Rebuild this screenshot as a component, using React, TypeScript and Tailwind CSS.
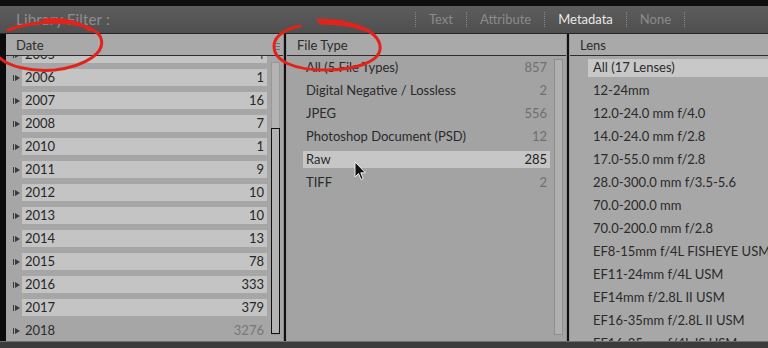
import React from 'react';

const dates: [string, string][] = [
  ['2005', '4'],
  ['2006', '1'],
  ['2007', '16'],
  ['2008', '7'],
  ['2010', '1'],
  ['2011', '9'],
  ['2012', '10'],
  ['2013', '10'],
  ['2014', '13'],
  ['2015', '78'],
  ['2016', '333'],
  ['2017', '379'],
];

const fileTypes = [
  { label: 'All (5 File Types)', count: '857' },
  { label: 'Digital Negative / Lossless', count: '2' },
  { label: 'JPEG', count: '556' },
  { label: 'Photoshop Document (PSD)', count: '12' },
  { label: 'Raw', count: '285', active: true },
  { label: 'TIFF', count: '2' },
];

const lenses = [
  'All (17 Lenses)',
  '12-24mm',
  '12.0-24.0 mm f/4.0',
  '14.0-24.0 mm f/2.8',
  '17.0-55.0 mm f/2.8',
  '28.0-300.0 mm f/3.5-5.6',
  '70.0-200.0 mm',
  '70.0-200.0 mm f/2.8',
  'EF8-15mm f/4L FISHEYE USM',
  'EF11-24mm f/4L USM',
  'EF14mm f/2.8L II USM',
  'EF16-35mm f/2.8L II USM',
  'EF16-35mm f/4L IS USM',
];

const Disclosure = () => (
  <svg width="8" height="8" viewBox="0 0 8 8" className="shrink-0">
    <rect x="0" y="1" width="1" height="6" fill="#3a3a3a" />
    <path d="M2 1 L7 4 L2 7 Z" fill="#3a3a3a" />
  </svg>
);

const Sep = () => <div className="h-[15px] border-l border-dotted border-[#8a8a8a]" />;

function ColumnHeader({ label, grip }: { label: string; grip?: boolean }) {
  return (
    <div className="h-[22px] shrink-0 flex items-center justify-between pt-[3px] pl-[10px] pr-[3px] bg-[#a9a9a9] border-b border-[#2e2e2e] text-[13px] text-[#2b2b2b]">
      <span>{label}</span>
      {grip && (
        <div className="flex flex-col gap-[2px] w-[5px]">
          <div className="h-px bg-[#707070]" />
          <div className="h-px bg-[#707070]" />
          <div className="h-px bg-[#707070]" />
        </div>
      )}
    </div>
  );
}

export default function App() {
  return (
    <div className="w-[768px] h-[348px] relative overflow-hidden bg-[#111] flex flex-col font-['Lato','Open_Sans',sans-serif] select-none">
      {/* top edge */}
      <div className="h-[6px] shrink-0 bg-[#0e0e0e]" />

      {/* filter bar */}
      <div className="h-[28px] shrink-0 bg-gradient-to-b from-[#5d5d5d] to-[#4f4f4f] flex items-center pl-[16px] pr-[83px] border-b border-[#262626]">
        <span className="text-[15px] text-[#8e8e8e] tracking-[0.2px]">Library Filter :</span>
        <div className="ml-auto flex items-center gap-[13px] text-[13px] text-[#8b8b8b]">
          <Sep />
          <span>Text</span>
          <Sep />
          <span>Attribute</span>
          <Sep />
          <span className="text-[#e8e8e8]">Metadata</span>
          <Sep />
          <span>None</span>
          <Sep />
        </div>
      </div>

      {/* columns */}
      <div className="flex h-[307px] shrink-0">
        <div className="w-[6px] shrink-0 bg-[#0c0c0c]" />

        {/* Date */}
        <div className="w-[278px] shrink-0 flex flex-col bg-[#a6a6a6] border-r border-[#8c8c8c]">
          <ColumnHeader label="Date" grip />
          <div className="flex-1 flex overflow-hidden">
            <div className="flex-1 overflow-hidden pl-[7px] pr-[4px]">
              <div className="-mt-[13px]">
                {dates.map(([y, n]) => (
                  <div key={y} className="h-[23px] flex items-center gap-[1px]">
                    <Disclosure />
                    <div className="flex-1 h-[17px] bg-[#c4c4c4] flex items-center justify-between px-[3px] text-[13px] text-[#262626]">
                      <span>{y}</span>
                      <span>{n}</span>
                    </div>
                  </div>
                ))}
                <div className="h-[23px] flex items-center gap-[1px]">
                  <Disclosure />
                  <div className="flex-1 h-[17px] flex items-center justify-between px-[3px] text-[13px]">
                    <span className="text-[#2c2c2c]">2018</span>
                    <span className="text-[#777]">3276</span>
                  </div>
                </div>
              </div>
            </div>
            <div className="w-[9px] mr-[3px] mt-[6px] mb-[6px] bg-[#b3b3b3] border border-[#999] flex flex-col">
              <div className="mt-[65px] flex-1 border border-[#111] -mx-px" />
            </div>
          </div>
        </div>

        {/* File Type */}
        <div className="w-[281px] shrink-0 flex flex-col bg-[#a3a3a3] border-l border-[#9a9a9a] ml-[2px] border-r border-r-[#8f8f8f]">
          <ColumnHeader label="File Type" />
          <div className="flex-1 flex overflow-hidden">
            <div className="flex-1 pl-[16px] pr-[4px]">
              {fileTypes.map((f) => (
                <div key={f.label} className="h-[23px] flex items-center">
                  <div
                    className={`flex-1 h-[17px] flex items-center justify-between px-[3px] text-[13px] text-[#2a2a2a] whitespace-nowrap ${f.active ? 'bg-[#c6c6c6]' : ''}`}
                  >
                    <span>{f.label}</span>
                    <span className={f.active ? 'text-[#222]' : 'text-[#6f6f6f]'}>{f.count}</span>
                  </div>
                </div>
              ))}
            </div>
            <div className="w-[9px] mr-[3px] mt-[3px] mb-[6px] bg-[#b0b0b0] border border-[#8e8e8e]" />
          </div>
        </div>

        {/* Lens */}
        <div className="flex-1 min-w-0 flex flex-col bg-[#a7a7a7] border-l border-[#9a9a9a] ml-[2px]">
          <ColumnHeader label="Lens" />
          <div className="flex-1 overflow-hidden pl-[18px]">
            {lenses.map((l, i) => (
              <div key={l} className="h-[23px] flex items-center">
                <div
                  className={`flex-1 h-[18px] flex items-center px-[5px] text-[13px] text-[#2a2a2a] whitespace-nowrap ${i === 0 ? 'bg-[#c8c8c8]' : ''}`}
                >
                  {l}
                </div>
              </div>
            ))}
          </div>
        </div>
      </div>

      {/* bottom bar */}
      <div className="flex-1 bg-[#3c3c3c] border-t border-[#707070]" />

      {/* mouse pointer */}
      <svg className="absolute left-[354px] top-[161px]" width="14" height="21" viewBox="0 0 14 21">
        <path d="M1 1 L1 16 L4.5 12.5 L7 18.5 L9.2 17.6 L6.8 11.8 L11.5 11.8 Z" fill="#111" stroke="#eee" strokeWidth="1" />
      </svg>

      {/* red annotation circles */}
      <svg className="absolute inset-0 pointer-events-none" width="768" height="348" viewBox="0 0 768 348">
        <g fill="none" stroke="#e3231b" strokeWidth="3" strokeLinecap="round">
          <path d="M8 30 C 40 18, 88 20, 100 36 C 108 52, 86 66, 55 70 C 30 72, 8 66, 0 58" />
          <path d="M44 20 C 62 18, 80 22, 90 30" />
          <path d="M318 20 C 350 20, 378 30, 380 46 C 382 62, 355 70, 325 70 C 296 70, 274 62, 274 46 C 274 34, 290 28, 300 26" />
          <path d="M320 23 C 340 23, 356 26, 366 30" />
        </g>
      </svg>
    </div>
  );
}
